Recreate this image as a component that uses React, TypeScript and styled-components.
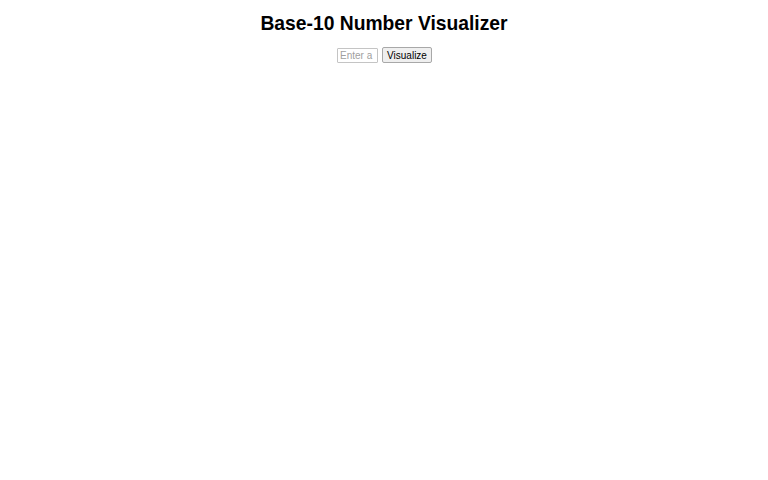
import React, { useState } from "react";
import styled, { createGlobalStyle } from "styled-components";

const GlobalStyle = createGlobalStyle`
  html, body {
    margin: 0;
    padding: 0;
    background: #ffffff;
  }
  body {
    font-family: "Liberation Sans", Arial, sans-serif;
  }
`;

const Page = styled.div`
  display: flex;
  flex-direction: column;
  align-items: center;
  padding-top: 12px;
`;

const Title = styled.h1`
  margin: 0;
  font-size: 19.3px;
  font-weight: bold;
  color: #000;
  line-height: 23px;
`;

const Controls = styled.div`
  display: flex;
  align-items: center;
  gap: 4px;
  margin-top: 12px;
  padding-left: 1px;
`;

const NumberInput = styled.input`
  box-sizing: border-box;
  width: 41px;
  height: 15px;
  padding: 0 2px;
  font-family: "Liberation Sans", Arial, sans-serif;
  font-size: 10px;
  border: 1px solid #c4c4c4;
  border-radius: 1px;
  &::placeholder {
    color: #a0a0a0;
  }
`;

const Button = styled.button`
  box-sizing: border-box;
  width: 50px;
  height: 16px;
  padding: 0;
  font-family: "Liberation Sans", Arial, sans-serif;
  font-size: 10px;
  color: #000;
  background: #efefef;
  border: 1px solid #a8a8a8;
  border-radius: 2px;
`;

export default function App() {
  const [value, setValue] = useState("");
  return (
    <>
      <GlobalStyle />
      <Page>
        <Title>Base-10 Number Visualizer</Title>
        <Controls>
          <NumberInput
            type="text"
            placeholder="Enter a number"
            value={value}
            onChange={(e) => setValue(e.target.value)}
          />
          <Button>Visualize</Button>
        </Controls>
      </Page>
    </>
  );
}
